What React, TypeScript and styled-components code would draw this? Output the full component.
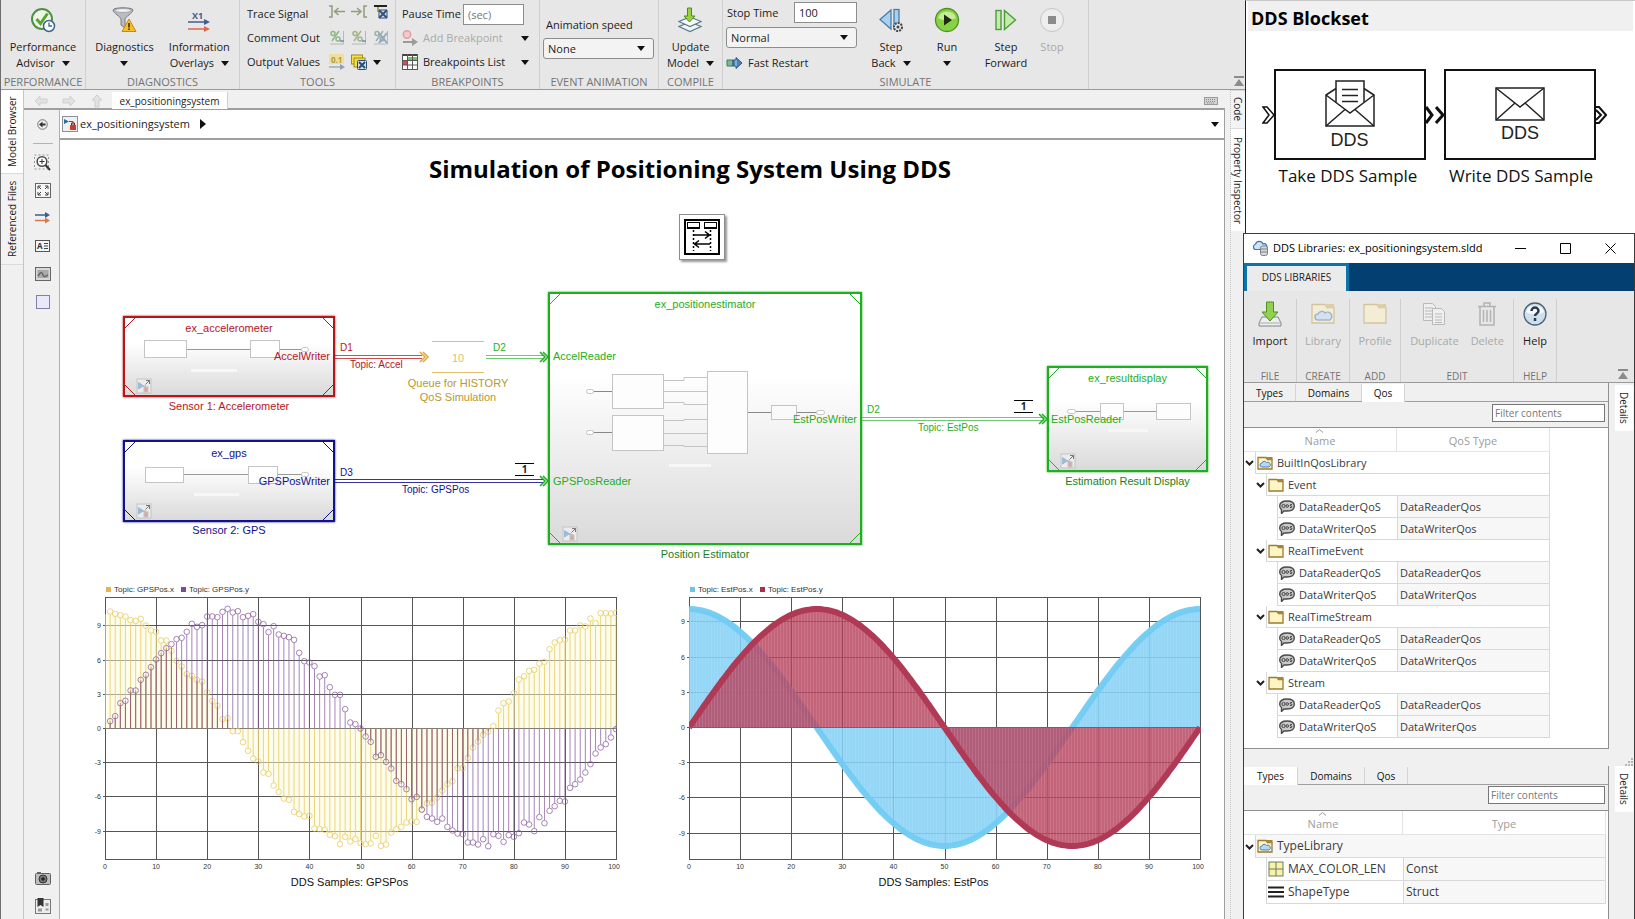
import React from "react";
import styled, { createGlobalStyle, css } from "styled-components";

const UI = `"Open Sans", "Noto Sans", sans-serif`;
const ARIAL = `"Liberation Sans", Arial, sans-serif`;

const GlobalStyle = createGlobalStyle`
  *, *::before, *::after { box-sizing: border-box; }
  body { margin: 0; background: #f0f0f0; color: #1c1c1c; font: 11px/16px ${UI}; }
  button, input, select { font: inherit; color: inherit; }
  button { border: 0; padding: 0; background: none; }
  h1, h2, figure { margin: 0; }
`;

const Page = styled.div`
  display: flex;
  min-height: 100vh;
  overflow: hidden;
`;

/* ---------- simulation window ---------- */

const MainWindow = styled.main`
  flex: 1;
  min-width: 0;
  display: flex;
  flex-direction: column;
  border-left: 1px solid #6e6e6e;
`;

const Toolstrip = styled.div`
  display: flex;
  height: 90px;
  background: #e7e7e7;
  border-bottom: 1px solid #9a9a9a;
`;

const ToolGroup = styled.section<{ $width: number }>`
  flex: 0 0 ${(p) => p.$width}px;
  display: flex;
  flex-direction: column;
  border-right: 1px solid #cfcfcf;
`;

const GroupBody = styled.div<{ $gap?: number }>`
  flex: 1;
  display: flex;
  justify-content: center;
  gap: ${(p) => p.$gap ?? 0}px;
`;

const GroupTitle = styled.div`
  height: 15px;
  font-size: 11px;
  line-height: 15px;
  text-align: center;
  white-space: nowrap;
  color: #747474;
`;

const BigButton = styled.button<{ $muted?: boolean }>`
  display: flex;
  flex-direction: column;
  align-items: center;
  padding-top: 7px;
  white-space: nowrap;
  color: ${(p) => (p.$muted ? "#a9a9a9" : "#1c1c1c")};
  svg { flex: none; }
`;

const BigLabel = styled.span`
  display: flex;
  flex-direction: column;
  align-items: center;
  padding-top: 6px;
  line-height: 16px;
`;

const Inline = styled.span`
  display: inline-flex;
  align-items: center;
  gap: 7px;
  height: 16px;
`;

const Rows = styled.div<{ $left?: number; $right?: number }>`
  flex: 1;
  display: flex;
  flex-direction: column;
  padding: 2px ${(p) => p.$right ?? 6}px 0 ${(p) => p.$left ?? 7}px;
`;

const Row = styled.div<{ $muted?: boolean; $gap?: number }>`
  display: flex;
  align-items: center;
  gap: ${(p) => p.$gap ?? 6}px;
  height: 24px;
  white-space: nowrap;
  color: ${(p) => (p.$muted ? "#a9a9a9" : "inherit")};
`;

const RowLabel = styled.span`
  width: 76px;
`;

const IconButton = styled.button`
  display: inline-flex;
  align-items: center;
  justify-content: center;
  min-width: 8px;
`;

const RowButton = styled.button`
  display: inline-flex;
  align-items: center;
  flex: 1;
  gap: 5px;
`;

const Field = styled.input<{ $width: number }>`
  width: ${(p) => p.$width}px;
  height: 21px;
  padding: 0 4px;
  border: 1px solid #8d8d8d;
  background: #fff;
  &::placeholder { color: #777; }
`;

const SelectWrap = styled.div<{ $width: number }>`
  position: relative;
  width: ${(p) => p.$width}px;
  select {
    width: 100%;
    height: 21px;
    padding: 0 4px;
    appearance: none;
    border: 1px solid #8d8d8d;
    border-radius: 3px;
    background: #f3f3f3;
  }
  svg { position: absolute; right: 9px; top: 8px; pointer-events: none; }
`;

const AnimationBody = styled.div`
  display: flex;
  flex-direction: column;
  gap: 5px;
  padding: 17px 4px 0 3px;
  flex: 1;
  label { padding-left: 3px; }
`;

const SimulateBody = styled.div`
  flex: 1;
  display: flex;
`;

const SimulateFields = styled.div`
  display: flex;
  flex-direction: column;
  gap: 4px;
  width: 137px;
  padding: 2px 0 0 3px;
`;

const StopTime = styled.div`
  display: flex;
  justify-content: space-between;
  align-items: center;
  width: 131px;
  padding-left: 1px;
`;

const RunButtons = styled.div`
  flex: 1;
  display: grid;
  grid-template-columns: 62px 50px 68px 24px;
`;

const ToolstripEnd = styled.div`
  flex: 1;
  display: flex;
  justify-content: flex-end;
  align-items: flex-end;
  padding: 0 1px 2px 0;
`;

const Workspace = styled.div`
  flex: 1;
  display: flex;
`;

const SideRail = styled.nav<{ $right?: boolean }>`
  display: flex;
  flex-direction: column;
  width: ${(p) => (p.$right ? 14 : 23)}px;
  ${(p) => !p.$right && css`border-right: 1px solid #c6c6c6; button { transform: rotate(180deg); }`}
`;

const RailTab = styled.button<{ $height: number; $active?: boolean }>`
  height: ${(p) => p.$height}px;
  width: ${(p) => (p.$active ? "100%" : "auto")};
  writing-mode: vertical-rl;
  font-size: 10px;
  line-height: 12px;
  white-space: nowrap;
  text-align: center;
  background: ${(p) => (p.$active ? "#fff" : "#f3f3f3")};
  border-top: 1px solid #dadada;
`;

const Editor = styled.div`
  flex: 1;
  min-width: 0;
  display: flex;
  flex-direction: column;
`;

const DocTabs = styled.div`
  display: flex;
  align-items: center;
  height: 20px;
  padding: 0 7px 0 10px;
  border-bottom: 2px solid #9f9f9f;
  > svg { margin-top: 3px; }
`;

const NavArrows = styled.div`
  display: flex;
  gap: 14px;
  width: 78px;
  padding-top: 3px;
  button { height: 14px; }
`;

const DocTab = styled.button`
  align-self: stretch;
  width: 116px;
  margin: 2px 0 -1px;
  background: #fff;
  border-right: 1px solid #cfcfcf;
  font-size: 10px;
  line-height: 16px;
`;

const Spacer = styled.span`
  flex: 1;
`;

const EditorBody = styled.div`
  flex: 1;
  display: flex;
`;

const Palette = styled.div`
  display: flex;
  flex-direction: column;
  align-items: center;
  width: 36px;
  padding: 5px 0 4px 2px;
  gap: 10px;
  border-right: 1px solid #b0b0b0;
  button { height: 18px; display: flex; align-items: center; }
`;

const PaletteRule = styled.hr`
  width: 20px;
  margin: 0 0 -1px;
  border: 0;
  border-top: 1px solid #b4b4b4;
`;

const Sheet = styled.div`
  flex: 1;
  min-width: 0;
  display: flex;
  flex-direction: column;
  background: #fff;
  border-right: 1px solid #9f9f9f;
`;

const Breadcrumb = styled.div`
  display: flex;
  align-items: center;
  height: 30px;
  padding: 0 4px 0 2px;
  border-bottom: 2px solid #9f9f9f;
`;

const Crumb = styled.button`
  display: inline-flex;
  align-items: center;
  gap: 2px;
  margin-right: 10px;
`;

const Canvas = styled.div`
  position: relative;
  flex: 1;
  min-height: 760px;
  overflow: hidden;
  font-family: ${ARIAL};
`;

const Gutter = styled.div`
  width: 6px;
  border-right: 1px dotted #c8c8c8;
`;

/* items on the diagram canvas: x / y are diagram coordinates */

const CanvasTitle = styled.h1`
  position: absolute;
  left: 350px;
  top: 13px;
  width: 560px;
  text-align: center;
  font: 700 24px/32px ${UI};
  color: #000;
`;

const Label = styled.div<{ $x: number; $y: number; $w?: number; $color: string; $size?: number; $align?: string }>`
  position: absolute;
  left: ${(p) => p.$x}px;
  top: ${(p) => p.$y}px;
  width: ${(p) => (p.$w ? `${p.$w}px` : "auto")};
  text-align: ${(p) => p.$align ?? "center"};
  font-size: ${(p) => p.$size ?? 11}px;
  line-height: 14px;
  white-space: nowrap;
  color: ${(p) => p.$color};
`;

const BlockBox = styled.div<{ $x: number; $y: number; $w: number; $h: number; $color: string }>`
  position: absolute;
  left: ${(p) => p.$x}px;
  top: ${(p) => p.$y}px;
  width: ${(p) => p.$w}px;
  height: ${(p) => p.$h}px;
  border: 2px solid ${(p) => p.$color};
  box-shadow: 0 0 2px ${(p) => p.$color};
  color: ${(p) => p.$color};
  background: linear-gradient(#fff 32%, #dadada);
  > svg { position: absolute; left: -2px; top: -2px; }
`;

const Wires = styled.svg`
  position: absolute;
  left: 0;
  top: 0;
`;

const ChartFigure = styled.figure<{ $x: number }>`
  position: absolute;
  left: ${(p) => p.$x}px;
  top: 440px;
  display: flex;
  flex-direction: column;
  align-items: center;
  figcaption {
    padding-right: 22px;
    font-size: 11px;
    line-height: 16px;
    color: #111;
  }
  svg { display: block; }
`;

const QueueBox = styled.div`
  position: absolute;
  left: 372px;
  top: 201px;
  width: 52px;
  height: 32px;
  border: solid #dfc06a;
  border-width: 1px 0;
  text-align: center;
  line-height: 33px;
  color: #e0c068;
`;

const DepthMark = styled.div<{ $x: number; $y: number }>`
  position: absolute;
  left: ${(p) => p.$x}px;
  top: ${(p) => p.$y}px;
  width: 19px;
  height: 13px;
  border: solid #000;
  border-width: 1px 0;
  text-align: center;
  font: 700 10px/11px ${UI};
`;

const ViewerIcon = styled.div`
  position: absolute;
  left: 619px;
  top: 74px;
  width: 46px;
  height: 46px;
  padding: 4px;
  border: 1px solid #8c8c8c;
  background: #fff;
  box-shadow: 2px 2px 2px #9a9a9a;
`;

/* ---------- right side ---------- */

const SidePane = styled.aside`
  flex: 0 0 390px;
  display: flex;
  flex-direction: column;
`;

const Blockset = styled.section`
  height: 233px;
  border-left: 1px solid #222;
  border-top: 1px solid #c8c8c8;
  background: #fff;
`;

const BlocksetTitle = styled.h2`
  height: 30px;
  margin: 0 2px;
  padding-left: 3px;
  background: #f0f0f0;
  font-size: 18px;
  line-height: 35px;
  color: #000;
`;

const BlocksetRow = styled.div`
  display: flex;
  gap: 1px;
  padding: 38px 0 0 16px;
`;

const LibraryBlock = styled.figure`
  display: flex;
  flex-direction: column;
  align-items: center;
  width: 172px;
  figcaption {
    margin-top: 4px;
    font-size: 17px;
    line-height: 24px;
    white-space: nowrap;
    color: #111;
  }
`;

const BlockRow = styled.div`
  display: flex;
  align-items: center;
`;

const BlockFace = styled.div`
  width: 152px;
  height: 91px;
  display: flex;
  flex-direction: column;
  align-items: center;
  justify-content: center;
  gap: 2px;
  border: 2px solid #111;
  font: 18px/20px ${ARIAL};
  color: #222;
`;

const PortIn = styled.svg`
  margin: 0 -1px 0 -1px;
`;

const LibWindow = styled.section`
  flex: 1;
  display: flex;
  flex-direction: column;
  margin-left: -2px;
  border: solid #3c3c3c;
  border-width: 1px 1px 0 1px;
  background: #f0f0f0;
`;

const TitleBar = styled.header`
  display: flex;
  align-items: center;
  height: 29px;
  padding: 0 18px 1px 8px;
  gap: 4px;
  background: #fff;
  color: #000;
`;

const WindowButtons = styled.div`
  display: flex;
  gap: 34px;
  margin-left: auto;
  svg { display: block; }
`;

const Ribbon = styled.div`
  display: flex;
  height: 28px;
  background: #043f72;
`;

const RibbonTab = styled.button`
  display: flex;
  justify-content: center;
  width: 105px;
  padding-top: 3px;
  border: 3px solid #0b74a8;
  border-bottom: 0;
  background: #ebebeb;
  line-height: 16px;
  font-size: 10px;
`;

const LibTools = styled(Toolstrip)`
  height: 92px;
  ${ToolstripEnd} { padding-right: 6px; }
`;

const LibGroup = styled(ToolGroup)`
  margin-top: 8px;
  ${GroupBody} { gap: 12px; }
  ${GroupTitle} { font-size: 10px; line-height: 18px; }
`;

const LibButton = styled(BigButton)`
  padding-top: 2px;
`;

const Pane = styled.div<{ $grow?: boolean }>`
  display: flex;
  gap: 6px;
  ${(p) => p.$grow && css`flex: 1;`}
`;

const PaneMain = styled.div<{ $last?: boolean }>`
  flex: 1;
  display: flex;
  flex-direction: column;
  border-right: 1px solid #8f8f8f;
  ${(p) => !p.$last && css`height: 366px; border-bottom: 1px solid #8f8f8f;`}
`;

const Tabs = styled.div`
  display: flex;
  height: 19px;
  padding-top: 1px;
  border-bottom: 1px solid #9f9f9f;
`;

const Tab = styled.button<{ $width: number; $active?: boolean }>`
  width: ${(p) => p.$width}px;
  margin-bottom: ${(p) => (p.$active ? -1 : 0)}px;
  border-right: 1px solid #d4d4d4;
  background: ${(p) => (p.$active ? "#fff" : "transparent")};
  font-size: 10px;
  line-height: 16px;
  color: #111;
`;

const FilterRow = styled.div<{ $compact?: boolean }>`
  display: flex;
  justify-content: flex-end;
  padding: ${(p) => (p.$compact ? 1 : 2)}px 3px ${(p) => (p.$compact ? 6 : 5)}px;
  border-bottom: 1px solid #8f8f8f;
  input {
    height: 18px;
    padding: 0 2px;
    font-size: 10px;
    border-color: #777;
  }
`;

const TableWrap = styled.div`
  flex: 1;
  background: #fff;
`;

const Tree = styled.table<{ $tall?: boolean }>`
  border-collapse: separate;
  border-spacing: 0;
  table-layout: fixed;
  color: #3a3a3a;
  td, th { padding: 0; height: ${(p) => (p.$tall ? 23 : 22)}px; }
  td { font-size: ${(p) => (p.$tall ? 12 : 11)}px; }
  th {
    position: relative;
    height: 24px;
    padding-top: 2px;
    font-weight: 400;
    color: #9c9c9c;
    border-right: 1px solid #e4e4e4;
    border-bottom: 1px solid #e4e4e4;
  }
  th svg { position: absolute; left: 50%; top: 1px; margin-left: -4px; }
`;

const NameCell = styled.div<{ $level: number; $tall?: boolean }>`
  display: flex;
  align-items: center;
  gap: 3px;
  height: ${(p) => (p.$tall ? 23 : 22)}px;
  margin-left: ${(p) => p.$level * 11}px;
  > span {
    flex: 1;
    display: flex;
    align-items: center;
    gap: 4px;
    align-self: stretch;
    padding-left: 1px;
    border: solid #d8d8d8;
    border-width: 0 0 1px 1px;
  }
`;

const Toggle = styled.button`
  width: 7px;
  height: 16px;
  display: flex;
  align-items: center;
  margin-left: 1px;
  svg { flex: none; }
`;

const ToggleGap = styled.i`
  width: 8px;
`;

const TypeCell = styled.td`
  background: #f7f7f7;
  border: 1px solid #d8d8d8;
  border-top: 0;
  && { padding-left: 2px; }
`;

const GroupCell = styled.td<{ $shade?: boolean }>`
  border-right: 1px solid #d8d8d8;
  span { background: ${(p) => (p.$shade ? "#f7f7f7" : "#fff")}; }
`;

const DetailsTab = styled.button<{ $top?: number }>`
  width: 18px;
  height: 46px;
  margin: ${(p) => p.$top ?? 0}px 1px 0 0;
  writing-mode: vertical-rl;
  background: #fff;
  font-size: 10px;
  line-height: 16px;
`;

const GripRow = styled.div`
  display: flex;
  justify-content: flex-end;
  align-items: flex-end;
  height: 17px;
  padding-right: 1px;
`;

/* ---------- icons ---------- */

const Caret = ({ w = 8 }: { w?: number }) => (
  <svg width={w} height="5" viewBox="0 0 8 5"><path d="M0 0h8L4 5z" fill="#111" /></svg>
);

const AdvisorIcon = () => (
  <svg width="26" height="26" viewBox="0 0 26 26" fill="none">
    <circle cx="12" cy="12" r="10" fill="#eef6e8" stroke="#4f8f4a" strokeWidth="2" />
    <path d="M6.500 12l4 4.500 7-10" stroke="#57a62f" strokeWidth="3" />
    <circle cx="19" cy="19" r="5.500" fill="#fff" stroke="#3c6690" strokeWidth="1.500" />
    <path d="M19 15.500V19h3" stroke="#3c6690" strokeWidth="1.300" />
  </svg>
);
const DiagnosticsIcon = () => (
  <svg width="26" height="26" viewBox="0 0 26 26">
    <path d="M2 3c0-3 20-3 20 0 0 3-8 7-8 9v9l-4-3v-6c0-2-8-6-8-9z" fill="#b9bcc0" stroke="#777c82" />
    <ellipse cx="12" cy="3.500" rx="8" ry="2" fill="#eceef0" stroke="#8b9096" strokeWidth=".7" />
    <path d="M18 12l7 12.500H11z" fill="#f6c02c" stroke="#c98a0c" />
    <path d="M18 16v4.500M18 21.500v1.500" stroke="#3d2e00" strokeWidth="1.600" />
  </svg>
);
const OverlayIcon = () => (
  <svg width="24" height="26" viewBox="0 0 24 26" fill="none">
    <text x="5" y="12" fontFamily="Open Sans" fontSize="9" fontWeight="700" fill="#3f5f8c">X1</text>
    <path d="M1 15h17" stroke="#3e5f90" strokeWidth="1.500" /><path d="M17 12l6 3-6 3z" fill="#3e5f90" />
    <path d="M1 22h17" stroke="#d9694f" strokeWidth="1.500" /><path d="M17 19l6 3-6 3z" fill="#d9694f" />
  </svg>
);
const TraceIcon = ({ flip }: { flip?: boolean }) => (
  <svg width="16" height="18" viewBox="0 0 16 18" fill="none" stroke="#8f9f7c" strokeWidth="1.500">
    {flip
      ? <path d="M16 1h-3v11h3M0 6.500h9M6 3l4 3.500L6 10" />
      : <path d="M0 1h3v11H0M16 6.500H6M9.500 3L5.500 6.500l4 3.500" />}
  </svg>
);
const ClearTraceIcon = () => (
  <svg width="16" height="18" viewBox="0 0 16 18" fill="none">
    <path d="M1 1h13" stroke="#222" strokeWidth="2" /><path d="M5 2v5" stroke="#c7a52a" strokeWidth="2" />
    <rect x="6" y="5" width="8" height="8" rx="1" fill="#d6e2ef" stroke="#2f5078" />
    <path d="M6 5l8 8M14 5l-8 8" stroke="#2f5078" strokeWidth="1.800" />
  </svg>
);
const CommentIcon = ({ tone, x }: { tone: string; x?: boolean }) => (
  <svg width="16" height="18" viewBox="0 0 16 18" fill="none">
    <path d="M1 15h13.500V2" stroke="#b3b9bf" />
    <g stroke={tone} strokeWidth="1.500"><circle cx="4" cy="4.500" r="2" /><circle cx="9" cy="10" r="2" /><path d="M10 2L3 12" /></g>
    {x ? <path d="M6 4l8 10M14 4L6 14" stroke="#90a8c0" strokeWidth="2" /> : <path d="M11 12h4" stroke="#8aa0b6" strokeWidth="2" />}
  </svg>
);
const OutputIcon = () => (
  <svg width="16" height="18" viewBox="0 0 16 18">
    <rect y="1" width="15" height="10" fill="#eee09b" />
    <text x="2" y="9.500" fontFamily="Open Sans" fontSize="8" fontWeight="700" fill="#b39b3e">0.1</text>
    <path d="M0 14h14" stroke="#9cacbe" strokeWidth="1.500" /><path d="M11 11l5 3-5 3z" fill="#8da0b8" />
  </svg>
);
const ClearOutputIcon = () => (
  <svg width="16" height="18" viewBox="0 0 16 18" fill="none">
    <rect x=".5" y="2" width="11" height="9" fill="#f7e14a" stroke="#a38a12" />
    <rect x="3" y="5" width="11" height="9" fill="#f2dc4d" stroke="#a38a12" />
    <rect x="6.500" y="7.500" width="9" height="9" rx="1" fill="#d6e2ef" stroke="#2b4a70" />
    <path d="M8 9l6 6M14 9l-6 6" stroke="#2b4a70" strokeWidth="2" />
  </svg>
);
const AddBreakIcon = () => (
  <svg width="16" height="16" viewBox="0 0 16 16" fill="none">
    <circle cx="5" cy="4.500" r="3.700" fill="#f3c9c9" stroke="#e0a0a0" strokeWidth="1.500" />
    <path d="M1 12h10" stroke="#9b9b9b" strokeWidth="2" /><path d="M10 8l6 4-6 4z" fill="#9b9b9b" />
  </svg>
);
const BreakListIcon = () => (
  <svg width="16" height="16" viewBox="0 0 16 16">
    <path fill="#fff" d="M0 0h16v16H0z" /><path d="M0 0h16v2H0z" fill="#444" />
    <path d="M6 3h10v3H6z" fill="#6fc46a" /><path d="M0 7h5v4H0z" fill="#d94b53" />
    <path d="M0 6.500h16M0 11h16M0 15.500h16M.500 0v16M5.500 0v16M10.500 0v16M15.500 0v16" stroke="#585858" fill="none" />
  </svg>
);
const UpdateIcon = () => (
  <svg width="24" height="26" viewBox="0 0 24 26">
    <path d="M12 15l11 4.500-11 5-11-5z" fill="#f1f6f9" stroke="#5c7b8d" strokeWidth="1.200" />
    <path d="M12 10l11 4.500-11 5-11-5z" fill="#fafcfd" stroke="#5c7b8d" strokeWidth="1.200" />
    <path d="M9.500 1h4v8h3.500l-5.500 6L6 9h3.500z" fill="#9bd13c" stroke="#4e8a1c" />
  </svg>
);
const FastRestartIcon = () => (
  <svg width="17" height="12" viewBox="0 0 17 12">
    <path d="M1 3h6v6H1z" fill="#7cb8a0" stroke="#3d7a62" /><path d="M7 3h3V.500l6 5.500-6 5.500V9H7z" fill="#4f81b8" stroke="#30557f" />
    <path d="M10 3v6" stroke="#bcd4ee" />
  </svg>
);
const StepBackIcon = () => (
  <svg width="24" height="26" viewBox="0 0 24 26">
    <path d="M12 3v19L1 12.500z" fill="#a9d0f0" stroke="#4a7da8" strokeWidth="1.300" />
    <rect x="15" y="2.500" width="5" height="19" fill="#a9d0f0" stroke="#4a7da8" strokeWidth="1.300" />
    <circle cx="19" cy="20" r="4" fill="#e8e8e8" stroke="#454545" strokeWidth="2" strokeDasharray="2 1" />
    <circle cx="19" cy="20" r="1.500" fill="#454545" />
  </svg>
);
const RunIcon = () => (
  <svg width="26" height="26" viewBox="0 0 26 26">
    <circle cx="13" cy="13" r="11.500" fill="#86d33f" stroke="#4f8f28" strokeWidth="1.300" />
    <path d="M4 11a9.500 9.500 0 0118 0c-5 3-13 3-18 0z" fill="#c6ec9a" />
    <path d="M10 7.500l8 5.500-8 5.500z" fill="#1e2a18" />
  </svg>
);
const StepForwardIcon = () => (
  <svg width="24" height="26" viewBox="0 0 24 26">
    <rect x="2" y="3.500" width="5" height="19" fill="#c5ecad" stroke="#4f9a3b" strokeWidth="1.400" />
    <path d="M10.500 3.500L21.500 13l-11 9.500z" fill="#c5ecad" stroke="#4f9a3b" strokeWidth="1.400" />
  </svg>
);
const StopIcon = () => (
  <svg width="26" height="26" viewBox="0 0 26 26">
    <circle cx="13" cy="13" r="11.500" fill="#eeeeee" stroke="#c4c4c4" /><rect x="9" y="9" width="8" height="8" fill="#8c8c8c" />
  </svg>
);
const CollapseIcon = () => (
  <svg width="10" height="11" viewBox="0 0 10 11"><path d="M0 0h10v2H0zM5 3l5 7H0z" fill="#8b8b8b" /></svg>
);
const NavArrow = ({ turn = 0 }: { turn?: number }) => (
  <svg width="14" height="14" viewBox="0 0 14 14">
    <path transform={`rotate(${turn} 7 7)`} d="M1 7l5-5v3h7v4H6v3z" fill="#e2e2e2" stroke="#cfcfcf" />
  </svg>
);
const KeyboardIcon = () => (
  <svg width="14" height="8" viewBox="0 0 14 8">
    <rect x=".5" y=".5" width="13" height="7" fill="#d4d4d4" stroke="#9a9a9a" />
    <path d="M2 2.500h10M2 4.500h10M3 6h8" stroke="#8a8a8a" strokeDasharray="1 1" />
  </svg>
);
const ModelIcon = () => (
  <svg width="16" height="16" viewBox="0 0 16 16">
    <rect x=".5" y=".5" width="15" height="15" fill="#eef0f2" stroke="#8a9096" />
    <path d="M2 3l5 2.500L2 8z" fill="#2d6c9e" /><path d="M7 5.500h4V9" stroke="#555" fill="none" />
    <rect x="8" y="9" width="6" height="5" fill="#d0392f" /><path d="M9.500 9V7h3v2" stroke="#8f231c" fill="none" />
  </svg>
);
const Play = () => (
  <svg width="6" height="10" viewBox="0 0 6 10"><path d="M0 0l6 5-6 5z" fill="#111" /></svg>
);

const paletteIcons = [
  <svg key="z" width="17" height="17" viewBox="0 0 17 17" fill="none">
    <rect x=".5" y="1" width="14" height="14" stroke="#999" strokeDasharray="2 2" />
    <circle cx="8" cy="7.500" r="4.800" fill="#fff" stroke="#4b4b4b" strokeWidth="1.500" />
    <path d="M5.500 7.500h5M8 5v5" stroke="#333" /><path d="M11.500 11l4.500 5" stroke="#333" strokeWidth="2" />
  </svg>,
  <svg key="f" width="16" height="15" viewBox="0 0 16 15" fill="none" stroke="#444">
    <rect x=".5" y=".5" width="15" height="14" fill="#f6f6f6" stroke="#666" />
    <path d="M3 6V3h3M10 3h3v3M13 9v3h-3M6 12H3V9M3 3l3 3M13 3l-3 3M13 12l-3-3M3 12l3-3" />
  </svg>,
  <svg key="a" width="15" height="12" viewBox="0 0 15 12">
    <path d="M0 3h11" stroke="#34618c" strokeWidth="1.500" /><path d="M10 0l5 3-5 3z" fill="#34618c" />
    <path d="M0 8.500h11" stroke="#d9784a" strokeWidth="1.500" /><path d="M10 5.500l5 3-5 3z" fill="#d9784a" />
  </svg>,
  <svg key="t" width="15" height="12" viewBox="0 0 15 12">
    <rect x=".5" y=".5" width="14" height="11" fill="#f6f6f6" stroke="#555" />
    <text x="2" y="9" fontFamily="Open Sans" fontSize="8" fontWeight="700" fill="#333">A</text>
    <path d="M9 3.500h4M9 6h4M9 8.500h4" stroke="#444" />
  </svg>,
  <svg key="i" width="16" height="14" viewBox="0 0 16 14" fill="none">
    <rect x=".5" y=".5" width="15" height="13" fill="#d8d8d8" stroke="#666" />
    <rect x="2.500" y="3" width="11" height="8" fill="#aaa" /><path d="M3 9c3-5 4-4 5-1s3 1 5 0" stroke="#666" strokeWidth="1.500" />
  </svg>,
  <svg key="s" width="14" height="14" viewBox="0 0 14 14"><rect x=".5" y=".5" width="13" height="13" fill="#e9e9fb" stroke="#8080a8" /></svg>,
];
const paletteNames = ["Zoom", "Fit to view", "Signals", "Annotation", "Image", "Area"];

const HideIcon = () => (
  <svg width="11" height="11" viewBox="0 0 11 11"><circle cx="5.500" cy="5.500" r="4.800" fill="#eee" stroke="#777" /><path d="M2 5.500L5.500 2.500v6zM5.500 4.500h3v2h-3z" fill="#333" /></svg>
);
const CameraIcon = () => (
  <svg width="16" height="14" viewBox="0 0 16 14">
    <rect x=".5" y="2.500" width="15" height="11" rx="1" fill="#bdbdbd" stroke="#606060" /><path d="M2 1h4v2H2z" fill="#666" />
    <circle cx="8" cy="8" r="4" fill="#777" stroke="#333" /><circle cx="8" cy="8" r="1.800" fill="#222" />
  </svg>
);
const BookmarkIcon = () => (
  <svg width="16" height="16" viewBox="0 0 16 16">
    <rect x=".5" y="1.500" width="15" height="14" fill="#ededed" stroke="#777" /><path d="M2.500 0h6v9L5.500 7l-3 2z" fill="#333" />
    <path d="M10.500 5h3v3h-3zM10.500 10.500h3v2h-3zM3 10.500h4v3H3z" fill="#999" />
  </svg>
);

/* small badge in the lower-left corner of every reference block */
const RefBadge = ({ x, y }: { x: number; y: number }) => (
  <g transform={`translate(${x} ${y})`}>
    <rect width="14" height="14" fill="#ececec" stroke="#c4c4c4" />
    <path d="M1.500 3.500v6.500l5-3.200zM6 7h3v2" fill="#9dbbd6" stroke="#9dbbd6" />
    <rect x="7" y="8" width="4" height="5" fill="#dda59d" /><path d="M9 1.500h3.500V5M12.500 1.500L8.500 5.500" stroke="#777" fill="none" />
  </g>
);

/* ---------- diagram ---------- */

const RED = "#b5161c";
const BLUE = "#12128c";
const GREEN = "#1fae22";
const DARK_GREEN = "#1c7f24";

type BlockProps = { x: number; y: number; w: number; h: number; color: string; badge: [number, number]; bar: [number, number, number]; children: React.ReactNode; texts: React.ReactNode };

const ModelBlock = ({ x, y, w, h, color, badge, bar, children, texts }: BlockProps) => (
  <BlockBox $x={x} $y={y} $w={w} $h={h} $color={color}>
    <svg width={w} height={h} fill="none" stroke="#c4c4c4">
      <g>{children}</g>
      <rect x={bar[0]} y={bar[1]} width={bar[2]} height="3" fill="#f7f7f7" stroke="none" />
      <RefBadge x={badge[0]} y={badge[1]} />
      <path stroke={color} d={`M2 12L12 2M${w - 12} 2l10 10M2 ${h - 12}l10 10M${w - 12} ${h - 2}l10-10`} />
    </svg>
    {texts}
  </BlockBox>
);

const Chevron = ({ x, y, color }: { x: number; y: number; color: string }) => (
  <path d={`M${x - 7} ${y - 5}l5 5-5 5M${x - 4} ${y - 5}l5 5-5 5`} stroke={color} strokeWidth="1.500" />
);

const Diagram = () => (
  <>
    <CanvasTitle>Simulation of Positioning System Using DDS</CanvasTitle>
    <ViewerIcon>
      <svg width="36" height="36" viewBox="0 0 36 36" fill="none" stroke="#000">
        <rect x="1" y="1" width="34" height="34" strokeWidth="2" />
        <rect x="3.500" y="3.500" width="12" height="5" fill="#fff" /><rect x="20.500" y="3.500" width="12" height="5" fill="#fff" />
        <path d="M3 9.500h13M20 9.500h13" />
        <path d="M9.500 11v21M26.500 11v21" strokeWidth="1.500" strokeDasharray="2 2" />
        <path d="M10 16h15M21 12.500l4.500 3.500-4.500 3.500M26 25H11M15 21.500L10.500 25l4.500 3.500" strokeWidth="1.500" />
      </svg>
    </ViewerIcon>

    <Wires width="1165" height="420" fill="none">
      <path d="M275 215.500h87M275 218.500h87" stroke={RED} strokeOpacity=".75" />
      <Chevron x={367} y={217} color="#e2a53c" />
      <path d="M426 215.500h58M426 218.500h58" stroke={GREEN} strokeOpacity=".65" />
      <Chevron x={487} y={217} color={GREEN} />
      <path d="M275 339.500h209M275 342.500h209" stroke={BLUE} strokeOpacity=".85" />
      <Chevron x={487} y={341} color={GREEN} />
      <path d="M802 277.500h182M802 280.500h182" stroke={GREEN} strokeOpacity=".65" />
      <Chevron x={986} y={279} color={GREEN} />
    </Wires>

    <ModelBlock x={63} y={176} w={212} h={81} color={RED} badge={[14, 63]} bar={[68, 53, 46]}
      texts={<><Label as="span" $x={-2} $y={3} $w={212} $color="inherit">ex_accelerometer</Label>
        <Label as="span" $x={140} $y={31} $w={65} $align="right" $color="inherit">AccelWriter</Label></>}>
      <path d="M64 33.500h64M156 33.500h24" stroke="#9a9a9a" strokeWidth="1" />
      <rect x="21.500" y="24.500" width="42" height="17" fill="#fff" /><rect x="127.500" y="24.500" width="29" height="17" fill="#fff" />
      <rect x="178.500" y="31.500" width="7" height="4" rx="2" fill="#fff" />
    </ModelBlock>
    <Label $x={63} $y={259} $w={212} $color={RED}>Sensor 1: Accelerometer</Label>

    <ModelBlock x={63} y={300} w={212} h={82} color={BLUE} badge={[14, 64]} bar={[71, 53, 45]}
      texts={<><Label as="span" $x={-2} $y={4} $w={212} $color="inherit">ex_gps</Label>
        <Label as="span" $x={125} $y={32} $w={80} $align="right" $color="inherit">GPSPosWriter</Label></>}>
      <path d="M60 34.500h66M154 34.500h26" stroke="#9a9a9a" />
      <rect x="22.500" y="27.500" width="38" height="15" fill="#fff" /><rect x="125.500" y="26.500" width="29" height="17" fill="#fff" />
      <rect x="178.500" y="32.500" width="7" height="4" rx="2" fill="#fff" />
    </ModelBlock>
    <Label $x={63} $y={383} $w={212} $color={BLUE}>Sensor 2: GPS</Label>

    <Label $x={280} $y={201} $size={10} $color={RED}>D1</Label>
    <Label $x={290} $y={218} $size={10} $color={RED}>Topic: Accel</Label>
    <QueueBox>10</QueueBox>
    <Label $x={338} $y={236} $w={120} $color="#b59832">Queue for HISTORY<br />QoS Simulation</Label>
    <Label $x={433} $y={201} $size={10} $color={GREEN}>D2</Label>
    <Label $x={280} $y={326} $size={10} $color={BLUE}>D3</Label>
    <Label $x={342} $y={343} $size={10} $color={BLUE}>Topic: GPSPos</Label>
    <DepthMark $x={455} $y={323}>1</DepthMark>

    <ModelBlock x={488} y={152} w={314} h={253} color={GREEN} badge={[15, 235]} bar={[121, 172, 42]}
      texts={<><Label as="span" $x={-2} $y={3} $w={314} $color="inherit">ex_positionestimator</Label>
        <Label as="span" $x={3} $y={55} $color="inherit">AccelReader</Label>
        <Label as="span" $x={3} $y={180} $color="inherit">GPSPosReader</Label>
        <Label as="span" $x={225} $y={118} $w={82} $align="right" $color="inherit">EstPosWriter</Label></>}>
      <path d="M45 99.500h20M45 140.500h20M200 120.500h24M249 120.500h20" stroke="#888" />
      <path d="M116 88.500h20v-3h24M116 99.500h44M116 110.500h20v2h24M116 128.500h20v-1h24M116 141.500h44M116 153.500h20v1h24" />
      <rect x="64.500" y="82.500" width="51" height="34" fill="#fdfdfd" /><rect x="64.500" y="123.500" width="51" height="35" fill="#fdfdfd" />
      <rect x="159.500" y="79.500" width="40" height="82" fill="#fdfdfd" /><rect x="223.500" y="113.500" width="25" height="14" fill="#fafafa" />
      <rect x="38.500" y="97.500" width="7" height="4" rx="2" fill="#fff" /><rect x="38.500" y="138.500" width="7" height="4" rx="2" fill="#fff" />
      <rect x="268.500" y="118.500" width="8" height="4" rx="2" fill="#fff" />
    </ModelBlock>
    <Label $x={488} $y={407} $w={314} $color={DARK_GREEN}>Position Estimator</Label>

    <Label $x={807} $y={263} $size={10} $color={GREEN}>D2</Label>
    <Label $x={858} $y={281} $size={10} $color={GREEN}>Topic: EstPos</Label>
    <DepthMark $x={954} $y={260}>1</DepthMark>

    <ModelBlock x={987} y={226} w={161} h={106} color={GREEN} badge={[14, 88]} bar={[61, 63, 40]}
      texts={<><Label as="span" $x={-2} $y={3} $w={161} $color="inherit">ex_resultdisplay</Label>
        <Label as="span" $x={2} $y={44} $color="inherit">EstPosReader</Label></>}>
      <path d="M28 45.500h26M77 45.500h33" stroke="#9a9a9a" />
      <rect x="53.500" y="37.500" width="23" height="16" fill="#fdfdfd" /><rect x="109.500" y="37.500" width="34" height="16" fill="#fdfdfd" />
      <rect x="20.500" y="43.500" width="8" height="4" rx="2" fill="#fff" />
    </ModelBlock>
    <Label $x={987} $y={334} $w={161} $color={DARK_GREEN}>Estimation Result Display</Label>
  </>
);

/* ---------- charts ---------- */

const gpsX = [0, 127, 134, 138, 142, 153, 155, 149, 169, 184, 188, 214, 214, 245, 275, 292, 315, 320, 332, 337, 370, 396, 410, 450, 447, 486, 486, 519, 545, 568, 577, 610, 614, 649, 668, 688, 692, 728, 735, 742, 740, 778, 780, 782, 797, 801, 825, 803, 817, 810, 822, 825, 823, 800, 830, 826, 790, 780, 773, 760, 757, 758, 722, 702, 700, 685, 664, 645, 636, 597, 597, 566, 535, 517, 497, 487, 471, 424, 402, 397, 372, 331, 321, 305, 302, 283, 278, 240, 220, 213, 211, 184, 184, 169, 172, 148, 162, 132, 132, 133, 131];
const gpsY = [0, 456, 441, 402, 395, 364, 364, 332, 317, 294, 271, 252, 237, 225, 210, 206, 188, 164, 173, 168, 142, 142, 144, 128, 119, 130, 126, 144, 140, 135, 158, 165, 189, 171, 196, 200, 204, 212, 251, 276, 280, 291, 322, 318, 354, 377, 377, 420, 460, 465, 478, 502, 518, 563, 558, 578, 598, 635, 645, 660, 690, 683, 721, 743, 748, 758, 748, 773, 784, 793, 795, 820, 820, 826, 810, 831, 795, 800, 818, 798, 803, 792, 760, 766, 786, 744, 762, 725, 711, 695, 697, 656, 645, 631, 610, 585, 553, 535, 525, 505, 480];
const toUnits = (raw: number[]) => raw.map((v) => (478 - v) / 34.2);

const PLOT = { left: 17, top: 18, width: 511, height: 262 };

type ChartProps = { x: number; title: string; names: [string, string]; colors: [string, string]; zero: number; unit: number; secondLegend: number; children: React.ReactNode };

const Chart = ({ x, title, names, colors, zero, unit, secondLegend, children }: ChartProps) => {
  const { left, top, width, height } = PLOT;
  const step = width / 10;
  return (
    <ChartFigure $x={x}>
      <svg width="545" height="294" fontFamily="Liberation Sans" fill="#333">
        <rect x={left + 1} y="7" width="5" height="5" fill={colors[0]} />
        <text x={left + 9} y="12" fontSize="8">{names[0]}</text>
        <rect x={left + secondLegend} y="7" width="5" height="5" fill={colors[1]} />
        <text x={left + secondLegend + 8} y="12" fontSize="8">{names[1]}</text>
        <g stroke="#555" fill="none">
          <rect x={left + 0.5} y={top - 0.5} width={width} height={height} />
          {[1, 2, 3, 4, 5, 6, 7, 8, 9].map((i) => <path key={i} d={`M${Math.round(left + i * step) + 0.5} ${top}v${height}`} />)}
          {[9, 6, 3, 0, -3, -6, -9].map((v) => <path key={v} d={`M${left - 2} ${Math.round(zero - v * unit) - 0.5}h${width + 2}`} />)}
        </g>
        <g fontSize="7">
          {[9, 6, 3, 0, -3, -6, -9].map((v) => <text key={v} x={left - 4} y={zero - v * unit + 2} textAnchor="end">{v}</text>)}
          {[0, 1, 2, 3, 4, 5, 6, 7, 8, 9, 10].map((i) => <text key={i} x={left + i * step - (i === 10 ? 2 : 0)} y={top + height + 9} textAnchor="middle">{i * 10}</text>)}
        </g>
        {children}
      </svg>
      <figcaption>{title}</figcaption>
    </ChartFigure>
  );
};

const Stems = ({ values, color }: { values: number[]; color: string }) => (
  <g stroke={color} fill="none">
    {values.map((v, i) => {
      if (i === 0) return null;
      const px = PLOT.left + i * 5.11;
      const py = 148.5 - v * 11.4;
      return (
        <g key={i}>
          <path d={`M${px} 148.500V${py + (v > 0 ? 3 : -3)}`} strokeOpacity=".75" />
          <circle cx={px} cy={py} r="2.800" strokeOpacity=".75" />
        </g>
      );
    })}
  </g>
);

const GpsChart = () => (
  <Chart x={28} title="DDS Samples: GPSPos" names={["Topic: GPSPos.x", "Topic: GPSPos.y"]} colors={["#e9b44c", "#7b4a9b"]} zero={149} unit={11.4} secondLegend={76}>
    <g clipPath="url(#gpsPlot)">
      <path fill="#fdfad8" fillOpacity=".5" d={`M17 148.500L${toUnits(gpsX).map((v, i) => `${17 + i * 5.11} ${148.5 - (i ? v : 10) * 11.4}`).join("L")}V148.500z`} />
      <Stems values={toUnits(gpsX)} color="#e6c85e" />
      <Stems values={toUnits(gpsY)} color="#8a5c9e" />
      {toUnits(gpsX).map((v, i) => {
        const w = toUnits(gpsY)[i];
        if (i === 0 || v * w <= 0) return null;
        const reach = Math.sign(v) * Math.min(Math.abs(v), Math.abs(w));
        return <path key={i} d={`M${17 + i * 5.11} 148.500v${-reach * 11.4}`} stroke="#8c4a52" strokeOpacity=".5" />;
      })}
    </g>
    <clipPath id="gpsPlot"><rect x="17" y="18" width="512" height="262" /></clipPath>
  </Chart>
);

const wave = (fn: (t: number) => number) =>
  Array.from({ length: 201 }, (_, i) => `${(17 + i * 2.555).toFixed(1)} ${(147.5 - 10.1 * fn((i / 200) * 2 * Math.PI) * 11.73).toFixed(1)}`).join("L");

const EstChart = () => {
  const cos = wave(Math.cos);
  const sin = wave(Math.sin);
  return (
    <Chart x={612} title="DDS Samples: EstPos" names={["Topic: EstPos.x", "Topic: EstPos.y"]} colors={["#6cc6e0", "#a8324e"]} zero={148} unit={11.73} secondLegend={71}>
      <defs>
        <pattern id="stripe" width="3" height="8" patternUnits="userSpaceOnUse"><path d="M.500 0v8" stroke="#fff" strokeOpacity=".1" /></pattern>
        <clipPath id="estPlot"><rect x="17" y="18" width="512" height="262" /></clipPath>
      </defs>
      <g clipPath="url(#estPlot)">
        <path d={`M17 147.500L${cos}V147.500z`} fill="#84d0f5" fillOpacity=".88" />
        <path d={`M17 147.500L${cos}V147.500z`} fill="url(#stripe)" />
        <path d={`M${cos}`} fill="none" stroke="#70cbf2" strokeWidth="6" strokeOpacity=".95" />
        <path d={`M17 147.500L${sin}V147.500z`} fill="#b7425e" fillOpacity=".82" />
        <path d={`M17 147.500L${sin}V147.500z`} fill="url(#stripe)" />
        <path d={`M${sin}`} fill="none" stroke="#b03a56" strokeWidth="6" />
        <path d="M17 147.500h512" stroke="#a8476a" />
      </g>
    </Chart>
  );
};

/* ---------- library icons ---------- */

const CloudDbIcon = () => (
  <svg width="17" height="16" viewBox="0 0 17 16">
    <path d="M3 9.500a3 3 0 01.5-5.500 4 4 0 017.500 0 2.500 2.500 0 012 5.500z" fill="#cfe2f5" stroke="#3d74ad" strokeWidth="1.200" />
    <rect x="8.500" y="6" width="7" height="9.500" rx="2" fill="#d5d8dc" stroke="#7d8289" /><path d="M8.500 9h7M8.500 12h7" stroke="#7d8289" />
  </svg>
);
const ImportIcon = () => (
  <svg width="24" height="26" viewBox="0 0 24 26">
    <path d="M4 16h16l3 6v3H1v-3z" fill="#eceeef" stroke="#7f868c" /><path d="M1 22h22" stroke="#aaa" />
    <path d="M8.500 1h7v10H20l-8 9-8-9h4.500z" fill="#92d050" stroke="#4c8f25" />
  </svg>
);
const FolderIcon = ({ cloud }: { cloud?: boolean }) => (
  <svg width="16" height="14" viewBox="0 0 16 14">
    <path d="M1 1.500h8l1.500 2H15V13H1z" fill="#fdf6c4" stroke="#9a7c32" strokeWidth="1.300" />
    <path d="M9.500 1h6v3h-5z" fill="#a5853c" />
    {cloud && <path d="M5 11a2 2 0 010-4 2.500 2.500 0 014.500-.5A2 2 0 0112 11z" fill="#b9d6f5" stroke="#4c80be" />}
  </svg>
);
const PaleFolderIcon = ({ cloud }: { cloud?: boolean }) => (
  <svg width="24" height="26" viewBox="0 0 24 26" opacity=".75">
    <path d="M1 3.500h13l2 3h7V22H1z" fill="#f8f0cf" stroke="#cbb98a" strokeWidth="1.300" />
    <path d="M15 3h8v4h-6z" fill="#d9c692" />
    {cloud && <path d="M7 19a3 3 0 010-6 4 4 0 017-1 3 3 0 015 7z" fill="#cfe0f2" stroke="#86a7cc" strokeWidth="1.500" />}
  </svg>
);
const DuplicateIcon = () => (
  <svg width="24" height="26" viewBox="0 0 24 26" fill="#efefef" stroke="#b9b9b9">
    <path d="M1.500 2.500h9l3 3v14h-12z" /><path d="M3 7h8M3 10h8M3 13h8M3 16h8" />
    <path d="M10.500 7.500h9l3 3v13h-12z" /><path d="M13 13h7M13 16h7M13 19h7M13 21.500h7" />
  </svg>
);
const TrashIcon = () => (
  <svg width="20" height="26" viewBox="0 0 20 26" fill="none" stroke="#b3b3b3" strokeWidth="1.500">
    <path d="M1 5.500h18M7 5V2h6v3M3 6v18h14V6M6.500 9v12M10 9v12M13.500 9v12" />
  </svg>
);
const HelpIcon = () => (
  <svg width="26" height="26" viewBox="0 0 26 26">
    <circle cx="13" cy="13" r="11" fill="#cfdfec" stroke="#48637c" strokeWidth="1.300" /><path d="M4 11a9.500 9.500 0 0118 0c-5 3-13 3-18 0z" fill="#f6fafd" />
    <path d="M9.500 10a3.500 3.500 0 117 0c0 2.500-3.500 2.500-3.500 5M13 17v3" fill="none" stroke="#2a3b50" strokeWidth="2.500" />
  </svg>
);
const QosIcon = () => (
  <svg width="16" height="14" viewBox="0 0 16 14">
    <path d="M8 1c4.500 0 7.300 2 7.300 5s-2.800 5-7.300 5H5l-2.500 2.500V9.500C1 8.500.7 7 .7 6 .7 3 3.500 1 8 1z" fill="#c9c9c9" stroke="#4a4a4a" strokeWidth="1.400" />
    <circle cx="4.500" cy="6" r="1.600" fill="none" stroke="#444" /><circle cx="8.200" cy="6" r="1.300" fill="none" stroke="#444" />
    <path d="M13 4.500h-1.500l-.5 1 2 1-.5 1H11" fill="none" stroke="#444" />
  </svg>
);
const ConstIcon = () => (
  <svg width="16" height="16" viewBox="0 0 16 16"><rect x="1" y="1" width="14" height="14" fill="#f4f3a6" stroke="#707a62" /><path d="M8 1v14M1 8h14" stroke="#707a62" /></svg>
);
const StructIcon = () => (
  <svg width="16" height="12" viewBox="0 0 16 12"><path d="M0 1.500h16M0 6h16M0 10.500h16" stroke="#222" strokeWidth="2" /></svg>
);
const Tick = () => (
  <svg width="9" height="6" viewBox="0 0 9 6" fill="none"><path d="M1 1l3.500 3.500L8 1" stroke="#222" strokeWidth="2" /></svg>
);
const SortMark = () => (
  <svg width="7" height="4" viewBox="0 0 7 4" fill="none"><path d="M0 3.500L3.500.500 7 3.500" stroke="#999" /></svg>
);
const Grip = () => (
  <svg width="8" height="8" viewBox="0 0 8 8" fill="#b5b5b5"><path d="M6 0h2v2H6zM3 3h2v2H3zM6 3h2v2H6zM0 6h2v2H0zM3 6h2v2H3zM6 6h2v2H6z" /></svg>
);

const OpenEnvelope = () => (
  <svg width="50" height="48" viewBox="0 0 50 48" fill="none" stroke="#222" strokeWidth="1.500">
    <path d="M11 8.500L1 15v31h48V15L39 8.500" /><path d="M11 22V1h28v21" /><path d="M1 15l24 18 24-18M1 46l19-16.500M49 46L30 29.500" />
    <path d="M17 9.500h16M17 15.500h16M17 21.500h16" />
  </svg>
);
const Envelope = () => (
  <svg width="50" height="34" viewBox="0 0 50 34" fill="none" stroke="#222" strokeWidth="1.500">
    <rect x="1" y="1" width="48" height="32" /><path d="M1 1l24 19L49 1M1 33l19-17M49 33L30 16" />
  </svg>
);

const toolRows = [
  { name: "Trace Signal", icons: [<TraceIcon key="a" />, <TraceIcon key="b" flip />, <ClearTraceIcon key="c" />] },
  { name: "Comment Out", icons: [<CommentIcon key="a" tone="#8fb887" />, <CommentIcon key="b" tone="#a3b48a" />, <CommentIcon key="c" tone="#9ab2a8" x />] },
  { name: "Output Values", icons: [<OutputIcon key="a" />, <ClearOutputIcon key="b" />, <Caret key="c" />] },
];

const MainToolstrip = () => (
  <Toolstrip>
    <ToolGroup $width={85}>
      <GroupBody>
        <BigButton><AdvisorIcon /><BigLabel>Performance<Inline>Advisor <Caret /></Inline></BigLabel></BigButton>
      </GroupBody>
      <GroupTitle>PERFORMANCE</GroupTitle>
    </ToolGroup>
    <ToolGroup $width={154}>
      <GroupBody $gap={15}>
        <BigButton><DiagnosticsIcon /><BigLabel>Diagnostics<Inline><Caret /></Inline></BigLabel></BigButton>
        <BigButton><OverlayIcon /><BigLabel>Information<Inline>Overlays <Caret /></Inline></BigLabel></BigButton>
      </GroupBody>
      <GroupTitle>DIAGNOSTICS</GroupTitle>
    </ToolGroup>
    <ToolGroup $width={155}>
      <Rows>
        {toolRows.map((r) => (
          <Row key={r.name}><RowLabel>{r.name}</RowLabel>{r.icons.map((icon, i) => <IconButton key={i} aria-label={`${r.name} ${i + 1}`}>{icon}</IconButton>)}</Row>
        ))}
      </Rows>
      <GroupTitle>TOOLS</GroupTitle>
    </ToolGroup>
    <ToolGroup $width={144}>
      <Rows $left={6} $right={10}>
        <Row $gap={2}><label htmlFor="pause">Pause Time</label><Field id="pause" $width={61} placeholder="(sec)" /></Row>
        <Row $muted><RowButton disabled><AddBreakIcon />Add Breakpoint</RowButton><Caret /></Row>
        <Row><RowButton><BreakListIcon />Breakpoints List</RowButton><Caret /></Row>
      </Rows>
      <GroupTitle>BREAKPOINTS</GroupTitle>
    </ToolGroup>
    <ToolGroup $width={118}>
      <AnimationBody>
        <label htmlFor="speed">Animation speed</label>
        <SelectWrap $width={111}><select id="speed"><option>None</option></select><Caret /></SelectWrap>
      </AnimationBody>
      <GroupTitle>EVENT ANIMATION</GroupTitle>
    </ToolGroup>
    <ToolGroup $width={64}>
      <GroupBody>
        <BigButton><UpdateIcon /><BigLabel>Update<Inline>Model <Caret /></Inline></BigLabel></BigButton>
      </GroupBody>
      <GroupTitle>COMPILE</GroupTitle>
    </ToolGroup>
    <ToolGroup $width={366}>
      <SimulateBody>
        <SimulateFields>
          <StopTime><label htmlFor="stop">Stop Time</label><Field id="stop" $width={63} defaultValue="100" /></StopTime>
          <SelectWrap $width={131}><select aria-label="Simulation mode"><option>Normal</option></select><Caret /></SelectWrap>
          <RowButton><FastRestartIcon />Fast Restart</RowButton>
        </SimulateFields>
        <RunButtons>
          <BigButton><StepBackIcon /><BigLabel>Step<Inline>Back <Caret /></Inline></BigLabel></BigButton>
          <BigButton><RunIcon /><BigLabel>Run<Inline><Caret /></Inline></BigLabel></BigButton>
          <BigButton><StepForwardIcon /><BigLabel>Step<span>Forward</span></BigLabel></BigButton>
          <BigButton $muted disabled><StopIcon /><BigLabel>Stop</BigLabel></BigButton>
        </RunButtons>
      </SimulateBody>
      <GroupTitle>SIMULATE</GroupTitle>
    </ToolGroup>
    <ToolstripEnd><IconButton aria-label="Collapse toolstrip"><CollapseIcon /></IconButton></ToolstripEnd>
  </Toolstrip>
);

type Item = { level: number; name: string; type?: string; icon: React.ReactNode };

const qosItems: Item[] = [
  { level: 0, name: "BuiltInQosLibrary", icon: <FolderIcon cloud /> },
  ...["Event", "RealTimeEvent", "RealTimeStream", "Stream"].flatMap((name) => [
    { level: 1, name, icon: <FolderIcon /> },
    { level: 2, name: "DataReaderQoS", type: "DataReaderQos", icon: <QosIcon /> },
    { level: 2, name: "DataWriterQoS", type: "DataWriterQos", icon: <QosIcon /> },
  ]),
];
const typeItems: Item[] = [
  { level: 0, name: "TypeLibrary", icon: <FolderIcon cloud /> },
  { level: 1, name: "MAX_COLOR_LEN", type: "Const", icon: <ConstIcon /> },
  { level: 1, name: "ShapeType", type: "Struct", icon: <StructIcon /> },
];

const TreeTable = ({ items, head, cols, tall }: { items: Item[]; head: string; cols: [number, number]; tall?: boolean }) => (
  <Tree $tall={tall} width={cols[0] + cols[1]}>
    <colgroup><col width={cols[0]} /><col width={cols[1]} /></colgroup>
    <thead><tr><th><SortMark />Name</th><th>{head}</th></tr></thead>
    <tbody>
      {items.map((it, i) => {
        const name = (
          <NameCell $level={it.level} $tall={tall}>
            {it.type ? <ToggleGap /> : <Toggle aria-label={`Collapse ${it.name}`}><Tick /></Toggle>}
            <span>{it.icon}{it.name}</span>
          </NameCell>
        );
        return (
          <tr key={i}>
            {it.type ? <><td>{name}</td><TypeCell>{it.type}</TypeCell></> : <GroupCell colSpan={2} $shade={tall}>{name}</GroupCell>}
          </tr>
        );
      })}
    </tbody>
  </Tree>
);

export default function App() {
  return (
    <Page>
      <GlobalStyle />
      <MainWindow>
        <MainToolstrip />
        <Workspace>
          <SideRail>
            <RailTab $height={84} $active>Model Browser</RailTab>
            <RailTab $height={91}>Referenced Files</RailTab>
          </SideRail>
          <Editor>
            <DocTabs>
              <NavArrows>
                <button aria-label="Back"><NavArrow /></button>
                <button aria-label="Forward"><NavArrow turn={180} /></button>
                <button aria-label="Up"><NavArrow turn={90} /></button>
              </NavArrows>
              <DocTab>ex_positioningsystem</DocTab>
              <Spacer />
              <KeyboardIcon />
            </DocTabs>
            <EditorBody>
              <Palette>
                <button aria-label="Hide browser"><HideIcon /></button>
                <PaletteRule />
                {paletteIcons.map((icon, i) => <button key={i} aria-label={paletteNames[i]}>{icon}</button>)}
                <Spacer />
                <button aria-label="Screenshot"><CameraIcon /></button>
                <button aria-label="Bookmarks"><BookmarkIcon /></button>
              </Palette>
              <Sheet>
                <Breadcrumb>
                  <Crumb><ModelIcon />ex_positioningsystem</Crumb>
                  <Play />
                  <Spacer />
                  <IconButton aria-label="Show path"><Caret w={10} /></IconButton>
                </Breadcrumb>
                <Canvas>
                  <Diagram />
                  <GpsChart />
                  <EstChart />
                </Canvas>
              </Sheet>
            </EditorBody>
          </Editor>
          <Gutter />
          <SideRail $right>
            <RailTab $height={38}>Code</RailTab>
            <RailTab $height={103} $active>Property Inspector</RailTab>
          </SideRail>
        </Workspace>
      </MainWindow>

      <SidePane>
        <Blockset>
          <BlocksetTitle>DDS Blockset</BlocksetTitle>
          <BlocksetRow>
            <LibraryBlock>
              <BlockRow>
                <PortIn width="13" height="18" viewBox="0 0 13 18" fill="none" stroke="#111" strokeWidth="1.500"><path d="M1 1h4l7 8-7 8H1l6-8z" /></PortIn>
                <BlockFace><OpenEnvelope />DDS</BlockFace>
                <PortIn width="10" height="18" viewBox="0 0 10 18" fill="none" stroke="#111" strokeWidth="3"><path d="M1 1l6 8-6 8" /></PortIn>
              </BlockRow>
              <figcaption>Take DDS Sample</figcaption>
            </LibraryBlock>
            <LibraryBlock>
              <BlockRow>
                <PortIn width="10" height="18" viewBox="0 0 10 18" fill="none" stroke="#111" strokeWidth="3"><path d="M1 1l7 8-7 8" /></PortIn>
                <BlockFace><Envelope />DDS</BlockFace>
                <PortIn width="12" height="18" viewBox="0 0 12 18" fill="none" stroke="#111" strokeWidth="2"><path d="M1 1h3l7 8-7 8H1M1 4l5 5-5 5" /></PortIn>
              </BlockRow>
              <figcaption>Write DDS Sample</figcaption>
            </LibraryBlock>
          </BlocksetRow>
        </Blockset>

        <LibWindow>
          <TitleBar>
            <CloudDbIcon />
            DDS Libraries: ex_positioningsystem.sldd
            <WindowButtons>
              <IconButton aria-label="Minimize"><svg width="11" height="11"><path d="M0 5.500h11" stroke="#000" /></svg></IconButton>
              <IconButton aria-label="Maximize"><svg width="11" height="11"><path d="M.5.500h10v10H.500z" stroke="#000" fill="none" /></svg></IconButton>
              <IconButton aria-label="Close"><svg width="11" height="11"><path d="M.5.500l10 10M10.500.500l-10 10" stroke="#000" /></svg></IconButton>
            </WindowButtons>
          </TitleBar>
          <Ribbon><RibbonTab>DDS LIBRARIES</RibbonTab></Ribbon>
          <LibTools>
            <LibGroup $width={53}><GroupBody><LibButton><ImportIcon /><BigLabel>Import</BigLabel></LibButton></GroupBody><GroupTitle>FILE</GroupTitle></LibGroup>
            <LibGroup $width={53}><GroupBody><LibButton $muted disabled><PaleFolderIcon cloud /><BigLabel>Library</BigLabel></LibButton></GroupBody><GroupTitle>CREATE</GroupTitle></LibGroup>
            <LibGroup $width={51}><GroupBody><LibButton $muted disabled><PaleFolderIcon /><BigLabel>Profile</BigLabel></LibButton></GroupBody><GroupTitle>ADD</GroupTitle></LibGroup>
            <LibGroup $width={113}><GroupBody><LibButton $muted disabled><DuplicateIcon /><BigLabel>Duplicate</BigLabel></LibButton><LibButton $muted disabled><TrashIcon /><BigLabel>Delete</BigLabel></LibButton></GroupBody><GroupTitle>EDIT</GroupTitle></LibGroup>
            <LibGroup $width={43}><GroupBody><LibButton><HelpIcon /><BigLabel>Help</BigLabel></LibButton></GroupBody><GroupTitle>HELP</GroupTitle></LibGroup>
            <ToolstripEnd><IconButton aria-label="Collapse ribbon"><CollapseIcon /></IconButton></ToolstripEnd>
          </LibTools>

          <Pane>
            <PaneMain>
              <Tabs><Tab $width={52}>Types</Tab><Tab $width={66}>Domains</Tab><Tab $width={43} $active>Qos</Tab></Tabs>
              <FilterRow><Field $width={113} aria-label="Filter contents" placeholder="Filter contents" /></FilterRow>
              <TableWrap><TreeTable items={qosItems} head="QoS Type" cols={[153, 153]} /></TableWrap>
            </PaneMain>
            <DetailsTab $top={2}>Details</DetailsTab>
          </Pane>
          <GripRow><Grip /></GripRow>
          <Pane $grow>
            <PaneMain $last>
              <Tabs><Tab $width={54} $active>Types</Tab><Tab $width={67}>Domains</Tab><Tab $width={43}>Qos</Tab></Tabs>
              <FilterRow $compact><Field $width={117} aria-label="Filter types" placeholder="Filter contents" /></FilterRow>
              <TableWrap><TreeTable items={typeItems} head="Type" cols={[159, 203]} tall /></TableWrap>
            </PaneMain>
            <DetailsTab>Details</DetailsTab>
          </Pane>
        </LibWindow>
      </SidePane>
    </Page>
  );
}
